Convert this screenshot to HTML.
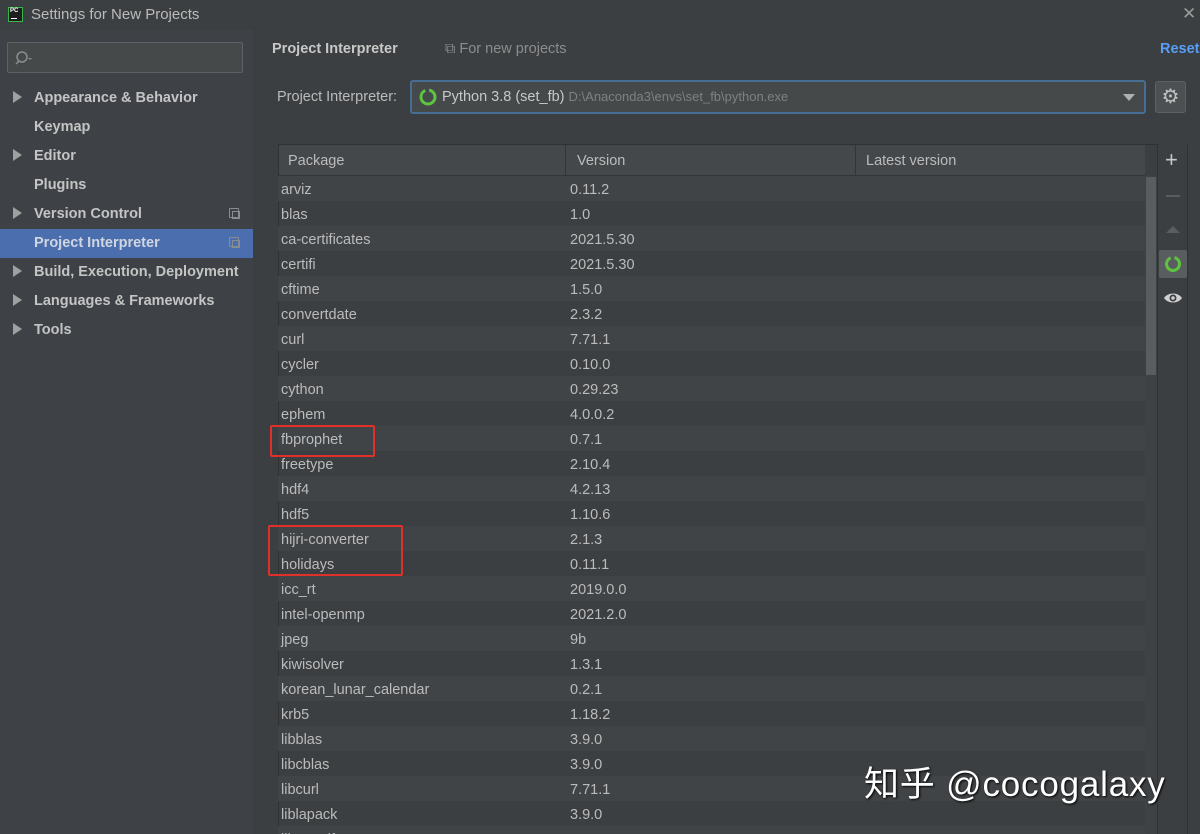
<!DOCTYPE html>
<html><head><meta charset="utf-8"><style>
*{margin:0;padding:0;box-sizing:border-box}
html{width:1200px;height:834px;overflow:hidden}
body{width:1200px;height:834px;overflow:hidden;background:#3c3f41;font-family:"Liberation Sans","Noto Sans CJK SC",sans-serif;color:#bbbbbb;position:relative}
.abs{position:absolute}
.title{left:31px;top:6px;font-size:15px;color:#bbbbbb}
.side{left:0;top:30px;width:253px;height:804px;background:#3e4246}
.search{left:7px;top:42px;width:236px;height:31px;border:1px solid #5e6164;background:#45494a;border-radius:2px}
.it{position:absolute;left:34px;font-size:14.5px;font-weight:bold;color:#c4c4c4;height:29px;line-height:29px}
.arr{position:absolute;left:13px;width:0;height:0;border-left:9px solid #a0a0a0;border-top:6px solid transparent;border-bottom:6px solid transparent}
.sel{left:0;top:229px;width:253px;height:29px;background:#4b6eaf}
.cp{position:absolute;left:229px;width:10px;height:10px;border:1px solid #8a8d90;border-radius:1px}
.cp::after{content:"";position:absolute;left:2px;top:2px;width:6px;height:6px;border:1px solid #8a8d90;background:transparent}
.row{position:absolute;left:278px;width:867px;height:25px;line-height:25px;font-size:14.5px;color:#bbbbbb}
.row span{position:absolute;left:3px;top:2px}
.row b{position:absolute;left:292px;top:2px;font-weight:normal}
.red{position:absolute;border:2px solid #e0302a;border-radius:2px}
.clip{position:absolute;left:0;top:0;width:1200px;height:834px;overflow:hidden}
</style></head><body><div class="clip">
<div class="abs" style="left:8px;top:7px;width:15px;height:15px;background:#1e1e1e;border:1px solid #3ab54a"><div style="font-size:6px;color:#fff;font-weight:bold;line-height:7px;padding-left:1px">PC</div><div style="position:absolute;left:2px;bottom:2px;width:6px;height:1px;background:#fff"></div></div>
<div class="abs title" style="top:6px">Settings for New Projects</div>
<div class="abs" style="left:1182px;top:4px;font-size:17px;color:#9a9a9a">✕</div>
<div class="abs side"></div>
<div class="abs search"><svg width="30" height="29"><circle cx="14" cy="14" r="5" fill="none" stroke="#8a8d90" stroke-width="1.5"/><line x1="11" y1="18" x2="8" y2="21" stroke="#8a8d90" stroke-width="1.5"/><path d="M20 15l4 0l-2 2z" fill="#8a8d90"/></svg></div>
<div class="abs sel"></div>
<div class="arr" style="top:91px"></div><div class="it" style="top:84px">Appearance &amp; Behavior</div>
<div class="it" style="top:113px">Keymap</div>
<div class="arr" style="top:149px"></div><div class="it" style="top:142px">Editor</div>
<div class="it" style="top:171px">Plugins</div>
<div class="arr" style="top:207px"></div><div class="it" style="top:200px">Version Control</div><div class="cp" style="top:208px"></div>
<div class="it" style="top:229px;color:#d0d6e0">Project Interpreter</div><div class="cp" style="top:237px"></div>
<div class="arr" style="top:265px"></div><div class="it" style="top:258px">Build, Execution, Deployment</div>
<div class="arr" style="top:294px"></div><div class="it" style="top:287px">Languages &amp; Frameworks</div>
<div class="arr" style="top:323px"></div><div class="it" style="top:316px">Tools</div>

<div class="abs" style="left:272px;top:41px;font-size:14.5px;font-weight:bold;color:#c8c8c8">Project Interpreter</div>
<div class="abs" style="left:445px;top:41px;font-size:14.5px;color:#8c8c8c">⧉ For new projects</div>
<div class="abs" style="left:1160px;top:41px;font-size:14.5px;font-weight:bold;color:#589df6">Reset</div>
<div class="abs" style="left:277px;top:89px;font-size:14.5px;color:#bbbbbb">Project Interpreter:</div>
<div class="abs" style="left:410px;top:80px;width:736px;height:34px;border:2px solid #466d94;border-radius:3px;background:#45494a"></div>
<svg class="abs" style="left:418px;top:87px" width="20" height="20"><circle cx="10" cy="10" r="7" fill="none" stroke="#5cc43f" stroke-width="3" stroke-dasharray="30 4"/></svg>
<div class="abs" style="left:442px;top:89px;font-size:14.5px;color:#c8c8c8">Python 3.8 (set_fb) <span style="font-size:13px;color:#808080">D:\Anaconda3\envs\set_fb\python.exe</span></div>
<div class="abs" style="left:1123px;top:94px;border-top:7px solid #b0b0b0;border-left:6px solid transparent;border-right:6px solid transparent"></div>
<div class="abs" style="left:1155px;top:81px;width:31px;height:32px;background:#4c5052;border:1px solid #5e6164;border-radius:3px;color:#c0c0c0;font-size:20px;text-align:center;line-height:30px">⚙</div>

<div class="abs" style="left:278px;top:144px;width:880px;height:700px;border:1px solid #2f3133;background:#3c3f41"></div>
<div class="abs" style="left:279px;top:145px;width:866px;height:31px;background:#45484a;border-bottom:1px solid #323435"></div>
<div class="abs" style="left:565px;top:145px;width:1px;height:31px;background:#323435"></div>
<div class="abs" style="left:855px;top:145px;width:1px;height:31px;background:#323435"></div>
<div class="abs" style="left:288px;top:153px;font-size:14.5px">Package</div>
<div class="abs" style="left:577px;top:153px;font-size:14.5px">Version</div>
<div class="abs" style="left:866px;top:153px;font-size:14.5px">Latest version</div>

<div class="row" style="top:176px;background:#414446"><span>arviz</span><b>0.11.2</b></div>
<div class="row" style="top:201px"><span>blas</span><b>1.0</b></div>
<div class="row" style="top:226px;background:#414446"><span>ca-certificates</span><b>2021.5.30</b></div>
<div class="row" style="top:251px"><span>certifi</span><b>2021.5.30</b></div>
<div class="row" style="top:276px;background:#414446"><span>cftime</span><b>1.5.0</b></div>
<div class="row" style="top:301px"><span>convertdate</span><b>2.3.2</b></div>
<div class="row" style="top:326px;background:#414446"><span>curl</span><b>7.71.1</b></div>
<div class="row" style="top:351px"><span>cycler</span><b>0.10.0</b></div>
<div class="row" style="top:376px;background:#414446"><span>cython</span><b>0.29.23</b></div>
<div class="row" style="top:401px"><span>ephem</span><b>4.0.0.2</b></div>
<div class="row" style="top:426px;background:#414446"><span>fbprophet</span><b>0.7.1</b></div>
<div class="row" style="top:451px"><span>freetype</span><b>2.10.4</b></div>
<div class="row" style="top:476px;background:#414446"><span>hdf4</span><b>4.2.13</b></div>
<div class="row" style="top:501px"><span>hdf5</span><b>1.10.6</b></div>
<div class="row" style="top:526px;background:#414446"><span>hijri-converter</span><b>2.1.3</b></div>
<div class="row" style="top:551px"><span>holidays</span><b>0.11.1</b></div>
<div class="row" style="top:576px;background:#414446"><span>icc_rt</span><b>2019.0.0</b></div>
<div class="row" style="top:601px"><span>intel-openmp</span><b>2021.2.0</b></div>
<div class="row" style="top:626px;background:#414446"><span>jpeg</span><b>9b</b></div>
<div class="row" style="top:651px"><span>kiwisolver</span><b>1.3.1</b></div>
<div class="row" style="top:676px;background:#414446"><span>korean_lunar_calendar</span><b>0.2.1</b></div>
<div class="row" style="top:701px"><span>krb5</span><b>1.18.2</b></div>
<div class="row" style="top:726px;background:#414446"><span>libblas</span><b>3.9.0</b></div>
<div class="row" style="top:751px"><span>libcblas</span><b>3.9.0</b></div>
<div class="row" style="top:776px;background:#414446"><span>libcurl</span><b>7.71.1</b></div>
<div class="row" style="top:801px"><span>liblapack</span><b>3.9.0</b></div>
<div class="row" style="top:826px;background:#414446"><span>libnetcdf</span><b>4.8.1</b></div>

<div class="abs" style="left:1145px;top:176px;width:12px;height:658px;background:#3f4244"></div>
<div class="abs" style="left:1146px;top:177px;width:10px;height:198px;background:#5a5d5f"></div>
<div class="abs" style="left:1157px;top:145px;width:31px;height:689px;background:#3c3f41;border-left:1px solid #2f3133;border-right:1px solid #2f3133"></div>
<div class="abs" style="left:1165px;top:147px;font-size:22px;color:#c8c8c8">+</div>
<div class="abs" style="left:1166px;top:195px;width:14px;height:2px;background:#5a5d5f"></div>
<div class="abs" style="left:1166px;top:226px;border-bottom:7px solid #5a5d5f;border-left:7px solid transparent;border-right:7px solid transparent"></div>
<div class="abs" style="left:1159px;top:250px;width:28px;height:28px;background:#5a5d5f;border-radius:2px"></div>
<svg class="abs" style="left:1163px;top:254px" width="20" height="20"><circle cx="10" cy="10" r="6.5" fill="none" stroke="#5cc43f" stroke-width="3" stroke-dasharray="28 4"/></svg>
<svg class="abs" style="left:1163px;top:290px" width="20" height="16"><path d="M1 8C5 2 15 2 19 8C15 14 5 14 1 8z" fill="#d0d0d0"/><circle cx="10" cy="8" r="3.5" fill="#3c3f41"/><circle cx="10" cy="8" r="1.8" fill="#d0d0d0"/></svg>

<div class="red" style="left:270px;top:425px;width:105px;height:32px"></div>
<div class="red" style="left:268px;top:525px;width:135px;height:51px"></div>
<div class="abs" style="left:864px;top:756px;font-size:35px;letter-spacing:0.8px;color:#ffffff;text-shadow:1px 1px 2px #000;white-space:nowrap">知乎 @cocogalaxy</div>
</div></body></html>
